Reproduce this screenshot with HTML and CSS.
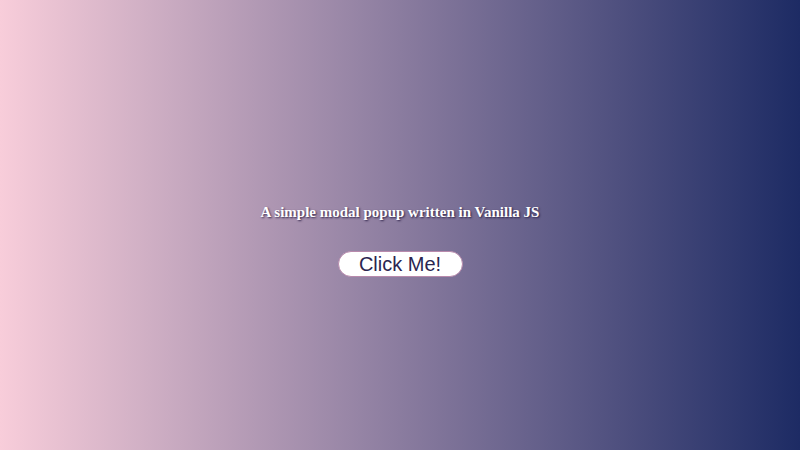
FILE: index.html
```html
<!DOCTYPE html>
<html lang="en">
<head>
    <meta charset="UTF-8">
    <meta name="viewport" content="width=device-width, initial-scale=1.0">
    <title>Modal</title>
    <link rel="stylesheet" href="styles.css">
</head>
<body>
    <div class="container">
        <h1 class="title">A simple modal popup written in Vanilla JS</h1>
        <button class="open-btn" id="openModal">Click Me!</button>
    </div>
</body>
</html>
```

FILE: styles.css
```css
body {
    margin: 0;
    height: 100vh;
    background: linear-gradient(to right, #f8cdda 0%, #1d2b64 100%);
    font-family: 'Liberation Serif', serif;
}
.container {
    height: 100%;
    display: flex;
    flex-direction: column;
    justify-content: center;
    align-items: center;
    padding-top: 30px;
    box-sizing: border-box;
}
.title {
    color: #fff;
    font-size: 15px;
    font-weight: bold;
    margin: 0 0 30px;
    text-shadow: 1px 1px 2px rgba(30, 20, 60, 0.85);
}
.open-btn {
    font-family: 'Liberation Sans', Arial, sans-serif;
    font-size: 20px;
    color: #2b2550;
    background: #fff;
    border: 1px solid #b88aac;
    border-radius: 13px;
    width: 125px;
    height: 26px;
    padding: 0;
    line-height: 24px;
    cursor: pointer;
}
```
